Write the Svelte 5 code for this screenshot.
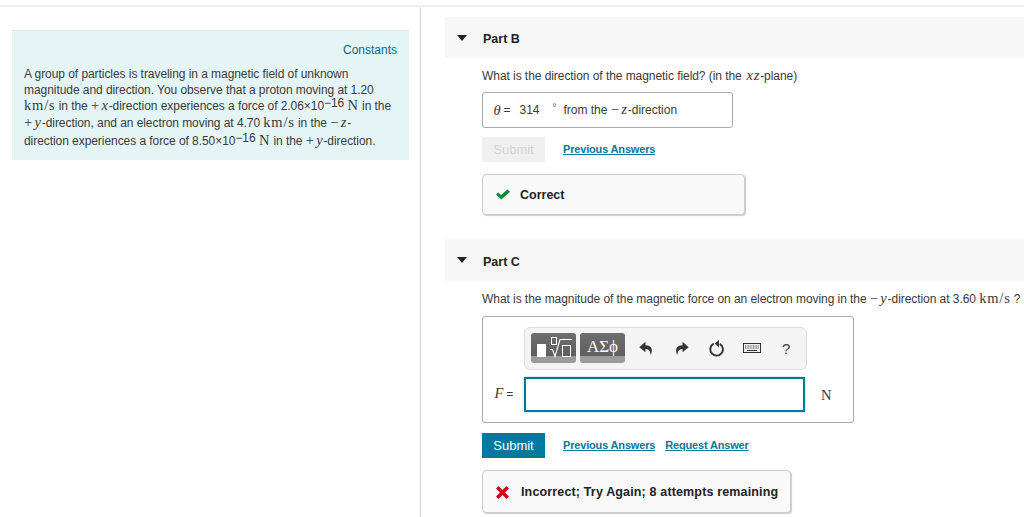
<script>
  const parts = { b: 'Part B', c: 'Part C' };
</script>

<div class="page">
  <div class="topbar"></div>
  <div class="columns">
    <aside class="left">
      <section class="info">
        <div class="constants">Constants</div>
        <p>
          <span class="l">A group of particles is traveling in a magnetic field of unknown</span>
          <span class="l">magnitude and direction. You observe that a proton moving at 1.20</span>
          <span class="l"><span class="m">km/s</span> in the <span class="m">+<i>x</i></span>-direction experiences a force of 2.06×10<sup>−16</sup> <span class="m">N</span> in the</span>
          <span class="l"><span class="m">+<i>y</i></span>-direction, and an electron moving at 4.70 <span class="m">km/s</span> in the <span class="m">−<i>z</i></span>-</span>
          <span class="l">direction experiences a force of 8.50×10<sup>−16</sup> <span class="m">N</span> in the <span class="m">+<i>y</i></span>-direction.</span>
        </p>
      </section>
    </aside>

    <main class="right">
      <header class="part">
        <svg class="caret" width="10" height="6" viewBox="0 0 10 6"><path d="M0 0h10L5 6z" fill="#222"/></svg>
        <span>{parts.b}</span>
      </header>
      <div class="body first">
        <div class="q">What is the direction of the magnetic field? (in the <span class="m"><i>xz</i></span>-plane)</div>
        <div class="answer">
          <span class="m"><i>θ</i></span><span class="eq">=</span>
          <span class="val">314</span>
          <span class="deg">°</span>
          <span>from the <span class="m">−<i>z</i></span>-direction</span>
        </div>
        <div class="actions a1">
          <button class="submit off">Submit</button>
          <a href="#p">Previous Answers</a>
        </div>
        <div class="feedback ok">
          <svg width="14" height="11" viewBox="0 0 14 11"><path d="M0 5.600l2.200-2.200 2.900 2.700L11.400.6 14 2.700 5.300 10.600z" fill="#0a8a3c"/></svg>
          <span>Correct</span>
        </div>
      </div>

      <header class="part second">
        <svg class="caret" width="10" height="6" viewBox="0 0 10 6"><path d="M0 0h10L5 6z" fill="#222"/></svg>
        <span>{parts.c}</span>
      </header>
      <div class="body">
        <div class="q q2">What is the magnitude of the magnetic force on an electron moving in the <span class="m">−<i>y</i></span>-direction at 3.60 <span class="m">km/s</span> ?</div>
        <div class="editor">
          <div class="toolbar">
            <div class="tbtn t1">
              <svg width="45" height="30" viewBox="0 0 45 30" fill="none" stroke="#fff">
                <rect x="6" y="11" width="9" height="13" fill="#fff" stroke="none"/>
                <rect x="20.500" y="4.500" width="5" height="7"/>
                <path d="M19 16.500l2.500 0 2.500 7 5-17h12" stroke-width="1.100"/>
                <rect x="31.500" y="12.500" width="8" height="11"/>
              </svg>
            </div>
            <div class="tbtn t2">ΑΣϕ</div>
            <svg class="ic i1" width="15" height="15" viewBox="0 0 14 14"><path d="M6 .8L.3 5.800 6 10.600V7.500c3 0 4.300 1.300 5 5.700C13.400 7.500 11.500 4 6 4z" fill="#333"/></svg>
            <svg class="ic i2" width="15" height="15" viewBox="0 0 14 14"><path d="M8 .8l5.700 5L8 10.600V7.500c-3 0-4.300 1.300-5 5.700C.6 7.500 2.500 4 8 4z" fill="#333"/></svg>
            <svg class="ic i3" width="16" height="18" viewBox="0 0 16 18" fill="none"><path d="M4.700 4.700a6.300 6.300 0 1 0 6 .1" stroke="#333" stroke-width="1.900"/><path d="M10 1v7.400L5.800 4.500z" fill="#333"/></svg>
            <svg class="ic i4" width="18" height="10" viewBox="0 0 18 10"><rect x=".5" y=".5" width="17" height="9" fill="#eee" stroke="#333"/><path d="M2 3h14M2 5h14" stroke="#555" stroke-dasharray="1 .6"/><path d="M4 7.500h10" stroke="#333"/></svg>
            <span class="help">?</span>
          </div>
          <div class="entry">
            <span class="flabel"><span class="m"><i>F</i></span><span class="eq">=</span></span>
            <div class="input"></div>
            <span class="unit m">N</span>
          </div>
        </div>
        <div class="actions a2">
          <button class="submit">Submit</button>
          <a href="#p">Previous Answers</a>
          <a href="#r" class="r">Request Answer</a>
        </div>
        <div class="feedback bad">
          <svg width="13" height="13" viewBox="0 0 13 13"><path d="M0 2.500L2.500 0l4 4 4-4L13 2.500l-4 4 4 4-2.500 2.500-4-4-4 4L0 10.500l4-4z" fill="#d0021b"/></svg>
          <span>Incorrect; Try Again; 8 attempts remaining</span>
        </div>
      </div>
    </main>
  </div>
</div>

<style>
  :global(body) { margin: 0; background: #fff; }
  .page {
    width: 1024px; height: 517px; overflow: hidden;
    font-family: "Liberation Sans", Arial, sans-serif; font-size: 12px; color: #3a3a3a;
  }
  .topbar { height: 5px; border-bottom: 2px solid #eee; }
  .columns { display: flex; height: 510px; }
  .left { flex: none; box-sizing: border-box; border-right: 1px solid #c5d7e8; padding: 23px 11px 0 12px; width: 421px; }
  .info { background: #e5f5f6; border-top: 1px solid #e3e9e9; height: 130px; box-sizing: border-box; padding: 12px 12px 0; }
  .constants { text-align: right; color: #0b6a80; line-height: 14px; }
  p { margin: 9px 0 0; }
  .l { display: block; height: 16px; line-height: 16px; white-space: nowrap; letter-spacing: -0.06px; }
  .l:nth-child(1) { height: 16px; }
  .l:nth-child(2) { height: 16px; }
  .l:nth-child(3) { height: 16.500px; }
  .l:nth-child(4) { height: 18.500px; }
  .m { font-family: "Liberation Serif", serif; font-size: 14.500px; letter-spacing: 0.800px; line-height: 0; }
  .m i { margin-left: 1.500px; }
  sup { font-size: 12px; line-height: 0; vertical-align: 3px; }
  .right { flex: 1; min-width: 0; padding: 10px 0 0 24px; }
  .part { height: 41px; background: #f7f7f7; display: flex; align-items: center; font-weight: bold; color: #222; font-size: 12.500px; padding-left: 12px; }
  .part span { margin-left: 16px; margin-top: 2px; }
  .part.second { margin-top: 24px; height: 42px; }
  .part.second span { margin-top: 3px; }
  .body { padding-left: 37px; }
  .q { margin-top: 10px; height: 16px; line-height: 16px; white-space: nowrap; letter-spacing: -0.06px; }
  .answer {
    margin-top: 8px; width: 251px; height: 36px; box-sizing: border-box; display: flex; align-items: center;
    border: 1px solid #aaa; border-radius: 3px; padding-left: 9px; white-space: nowrap;
  }
  .eq { margin-left: 2px; }
  .val { margin-left: 9px; width: 25px; }
  .deg { width: 11px; color: #555; margin-top: -6px; margin-left: 8px; font-size: 10px; box-sizing: border-box; }
  .actions { display: flex; align-items: center; }
  .a1 { margin-top: 9px; }
  .a2 { margin-top: 10px; }
  .submit {
    width: 63px; height: 25px; border: 0; padding: 0; background: #00799e; color: #fff; font: 13px "Liberation Sans", Arial, sans-serif;
  }
  .submit.off { background: #f0f0f0; color: #d4d4d4; }
  a { margin: 0 0 2px 18px; font-size: 11px; font-weight: bold; color: #00799e; text-decoration: underline; letter-spacing: -0.170px; }
  a.r { margin-left: 10px; }
  .feedback {
    box-sizing: border-box; height: 41px; margin-top: 12px; display: flex; align-items: center; background: #f9f9f9;
    border: 1px solid #ccc; border-radius: 4px; box-shadow: 1px 1px 1px #ccc; font-weight: bold; color: #222; font-size: 12.500px; white-space: nowrap;
  }
  .ok { width: 263px; padding-left: 13px; }
  .ok span { margin-left: 10px; }
  .bad { width: 309px; height: 43px; margin-top: 12px; padding: 1px 0 0 13px; }
  .bad span { margin-left: 12px; letter-spacing: 0.150px; }
  .editor {
    margin-top: 9px; width: 372px; height: 107px; box-sizing: border-box; border: 1px solid #aaa; border-radius: 3px; padding: 10px 0 0 41px;
  }
  .toolbar {
    width: 283px; height: 43px; box-sizing: border-box; display: flex; align-items: center; background: #f4f4f4;
    border: 1px solid #ddd; border-radius: 6px; padding: 0 0 1px 6px;
  }
  .tbtn {
    height: 30px; box-sizing: border-box; border-radius: 3px; color: #fff; display: flex; align-items: center; justify-content: center;
    background: linear-gradient(#6e6e6e 0, #5e5e5e 78%, #9b9b9b 78%, #9b9b9b 100%);
  }
  .t1 { width: 45px; }
  .t2 { width: 45px; margin-left: 4px; font: 17px "Liberation Serif", serif; padding-bottom: 2px; }
  .ic { flex: none; }
  .i1 { margin-left: 14px; }
  .i2 { margin-left: 20px; }
  .i3 { margin-left: 20px; }
  .i4 { margin-left: 18px; }
  .help { margin-left: 21px; font-size: 15px; color: #444; }
  .entry { display: flex; align-items: center; margin-top: 7px; margin-left: -31px; }
  .flabel { width: 31px; flex: none; white-space: nowrap; line-height: 35px; }
  .input { width: 281px; height: 35px; box-sizing: border-box; border: 2px solid #00799e; flex: none; background: #fff; box-shadow: 0 0 2px #9cc; }
  .unit { margin-left: 16px; }
</style>
